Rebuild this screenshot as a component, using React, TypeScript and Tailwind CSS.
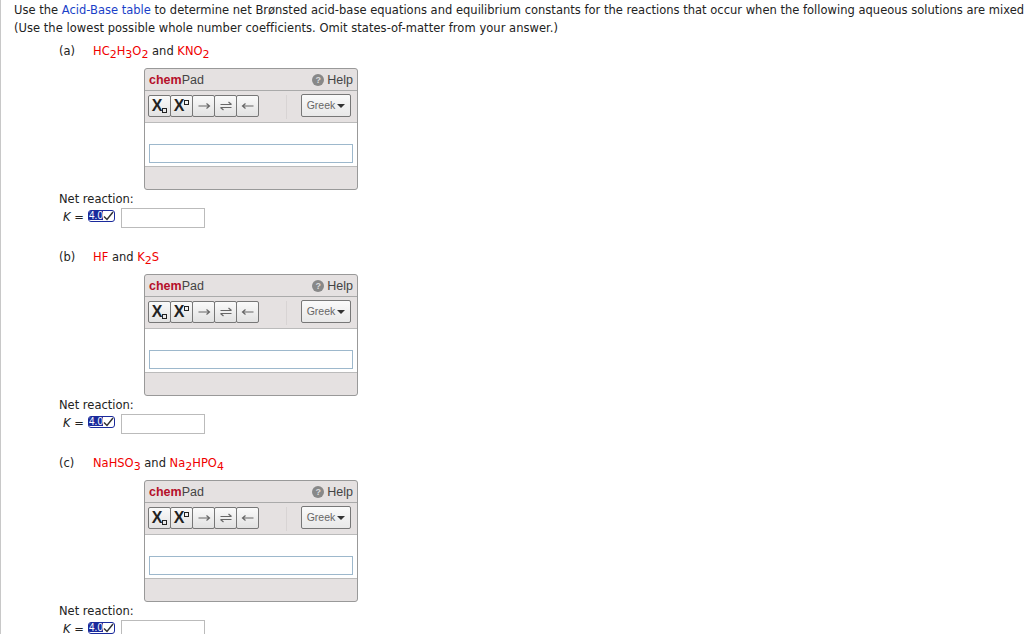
import React from 'react';

const Sub: React.FC<{ children: React.ReactNode }> = ({ children }) => (
  <span className="align-[-3px] text-[11px] leading-none">{children}</span>
);

const ToolButton: React.FC<{ children: React.ReactNode }> = ({ children }) => (
  <div className="-ml-px flex h-[22px] w-[23px] items-center justify-center rounded-[2px] border border-[#777] bg-gradient-to-b from-[#fafafa] to-[#e2e2e2] first:ml-0">
    {children}
  </div>
);

const ArrowIcon: React.FC<{ d: string }> = ({ d }) => (
  <svg width="14" height="14" viewBox="0 0 14 14" fill="none" stroke="#666" strokeWidth="1.2">
    <path d={d} />
  </svg>
);

const ChemPad: React.FC = () => (
  <div className="ml-[143px] flex h-[122px] w-[214px] flex-col overflow-hidden rounded-[3px] border border-[#999] bg-[#e5e1e1] font-['Liberation_Sans',sans-serif]">
    <div className="flex h-[22px] shrink-0 items-center justify-between border-b border-[#aaa] px-[4px] pt-px text-[12.5px] text-[#444]">
      <span>
        <span className="font-bold text-[#b5102a]">chem</span>Pad
      </span>
      <span className="flex items-center gap-[3px]">
        <span className="flex h-[12px] w-[12px] items-center justify-center rounded-full bg-[#888] text-[9px] font-bold leading-none text-[#ddd]">?</span>
        <span>Help</span>
      </span>
    </div>
    <div className="flex h-[31px] shrink-0 items-start bg-[#e5e1e1] pl-[3px] pr-[6px] pt-[4px]">
      <ToolButton>
        <span className="text-[16px] font-bold leading-none text-[#222]">X</span>
        <span className="mt-[8px] h-[5px] w-[5px] border border-[#222]" />
      </ToolButton>
      <ToolButton>
        <span className="text-[16px] font-bold leading-none text-[#222]">X</span>
        <span className="mb-[7px] h-[5px] w-[5px] border border-[#222]" />
      </ToolButton>
      <ToolButton>
        <ArrowIcon d="M1.5 7h11M9.5 4.5 12.5 7l-3 2.5" />
      </ToolButton>
      <ToolButton>
        <ArrowIcon d="M1.5 5.5h11M9.5 3l3 2.5M12.5 8.5h-11M4.5 11l-3-2.5" />
      </ToolButton>
      <ToolButton>
        <ArrowIcon d="M12.5 7h-11M4.5 4.5 1.5 7l3 2.5" />
      </ToolButton>
      <div className="ml-auto flex items-start">
        <div className="mr-[14px] h-[24px] w-px bg-[#d8d4d4]" />
        <div className="-mt-px flex h-[23px] w-[50px] items-center justify-center gap-[2px] rounded-[2px] border border-[#777] bg-gradient-to-b from-[#fafafa] to-[#e8e8e8] text-[10.5px] text-[#666]">
          Greek
          <span className="h-0 w-0 border-x-[4px] border-t-[4px] border-x-transparent border-t-[#333]" />
        </div>
      </div>
    </div>
    <div className="flex h-[45px] shrink-0 items-end border-y border-[#bbb] bg-white px-[4px] pb-[3px]">
      <div className="h-[19px] w-full border border-[#9db8cc] bg-white" />
    </div>
  </div>
);

const Question: React.FC<{ label: string; formula: React.ReactNode }> = ({ label, formula }) => (
  <section className="h-[206px]">
    <div className="flex h-[18px] items-center pl-[58px]">
      <span className="w-[34px]">{label}</span>
      <span>{formula}</span>
    </div>
    <div className="mt-[7px]">
      <ChemPad />
    </div>
    <div className="pl-[58px] leading-[18px]">Net reaction:</div>
    <div className="flex h-[20px] items-center">
      <span className="ml-[62px] w-[25px]">
        <i>K</i> =
      </span>
      <span className="mb-[4px] flex h-[12px] w-[27px] overflow-hidden rounded-[3px] border border-[#1a2a9c] bg-white font-['Liberation_Sans',sans-serif]">
        <span className="flex w-[14px] shrink-0 items-center justify-center bg-[#1a2a9c] text-[10px] leading-none text-white underline">4.0</span>
        <svg width="11" height="10" viewBox="0 0 11 10" fill="none" stroke="#333" strokeWidth="1.5" className="shrink-0">
          <path d="M1 5.5 4 8.5 10 1" />
        </svg>
      </span>
      <div className="ml-[6px] h-[20px] w-[84px] border border-[#bbb] bg-white" />
    </div>
  </section>
);

const Red: React.FC<{ children: React.ReactNode }> = ({ children }) => (
  <span className="text-[#f00000]">{children}</span>
);

export default function App() {
  return (
    <div className="h-[634px] w-[1024px] overflow-hidden border-l border-[#c8c8c8] bg-white pt-px font-['DejaVu_Sans',sans-serif] text-[11.5px] whitespace-nowrap text-[#222]">
      <div className="pl-[13px] leading-[18px] tracking-[0.01px]">
        Use the <span className="text-[#1a3fc8]">Acid-Base table</span> to determine net Brønsted acid-base equations and equilibrium constants for the reactions that occur when the following aqueous solutions are mixed
      </div>
      <div className="pl-[13px] leading-[18px] tracking-[0.04px]">
        (Use the lowest possible whole number coefficients. Omit states-of-matter from your answer.)
      </div>
      <div className="mt-[6px]">
        <Question
          label="(a)"
          formula={
            <>
              <Red>
                HC<Sub>2</Sub>H<Sub>3</Sub>O<Sub>2</Sub>
              </Red>{' '}
              and{' '}
              <Red>
                KNO<Sub>2</Sub>
              </Red>
            </>
          }
        />
        <Question
          label="(b)"
          formula={
            <>
              <Red>HF</Red> and{' '}
              <Red>
                K<Sub>2</Sub>S
              </Red>
            </>
          }
        />
        <Question
          label="(c)"
          formula={
            <>
              <Red>
                NaHSO<Sub>3</Sub>
              </Red>{' '}
              and{' '}
              <Red>
                Na<Sub>2</Sub>HPO<Sub>4</Sub>
              </Red>
            </>
          }
        />
      </div>
    </div>
  );
}
